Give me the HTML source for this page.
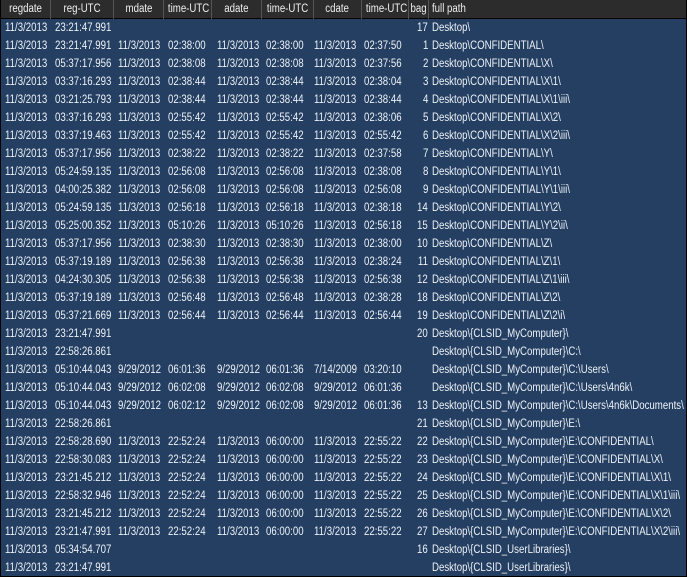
<!DOCTYPE html>
<html><head><meta charset="utf-8"><style>
*{margin:0;padding:0;box-sizing:border-box}
body{width:687px;height:577px;background:#000;overflow:hidden;font-family:"Liberation Sans Narrow","Liberation Sans",sans-serif;font-size:11.5px;color:#eef2f7}
#w{position:absolute;left:1px;top:0;width:685px;height:576px;background:#243f62}
#h{position:absolute;left:0;top:0;width:685px;height:19px;background:#2c2c2c;border-bottom:1px solid #000}
#h div{position:absolute;top:0;height:19px;line-height:18px;text-align:center;border-right:1px solid #555;color:#f0f0f0;white-space:nowrap;overflow:visible}
#h div span,.r span i{display:inline-block;transform:scaleX(.84);font-style:normal;white-space:nowrap}
.r{position:absolute;left:0;height:18px;width:685px;line-height:18px;white-space:nowrap}
.r span{position:absolute;top:0}
.r span i{transform-origin:left center}
.r span.b{left:auto;right:258px}
.r span.b i{transform-origin:right center}
.a{left:4px}.c{left:54px}.d{left:117px}.e{left:167px}.f{left:216px}.g{left:265px}.k{left:313px}.l{left:363px}.p{left:431px}
</style></head><body><div id="w">
<div id="h">
<div style="left:0;width:50px"><span>regdate</span></div>
<div style="left:50px;width:63px"><span>reg-UTC</span></div>
<div style="left:113px;width:50px"><span>mdate</span></div>
<div style="left:163px;width:48px"><span>time-UTC</span></div>
<div style="left:211px;width:50px"><span>adate</span></div>
<div style="left:261px;width:52px"><span>time-UTC</span></div>
<div style="left:313px;width:48px"><span>cdate</span></div>
<div style="left:361px;width:47px"><span>time-UTC</span></div>
<div style="left:408px;width:20px"><span>bag</span></div>
<div style="left:428px;width:257px;text-align:left;padding-left:3px;border:none"><span style="transform-origin:left center">full path</span></div>
</div>

<div class="r" style="top:19px"><span class="a"><i>11/3/2013</i></span><span class="c"><i>23:21:47.991</i></span><span class="b"><i>17</i></span><span class="p"><i>Desktop\</i></span></div>
<div class="r" style="top:37px"><span class="a"><i>11/3/2013</i></span><span class="c"><i>23:21:47.991</i></span><span class="d"><i>11/3/2013</i></span><span class="e"><i>02:38:00</i></span><span class="f"><i>11/3/2013</i></span><span class="g"><i>02:38:00</i></span><span class="k"><i>11/3/2013</i></span><span class="l"><i>02:37:50</i></span><span class="b"><i>1</i></span><span class="p"><i>Desktop\CONFIDENTIAL\</i></span></div>
<div class="r" style="top:55px"><span class="a"><i>11/3/2013</i></span><span class="c"><i>05:37:17.956</i></span><span class="d"><i>11/3/2013</i></span><span class="e"><i>02:38:08</i></span><span class="f"><i>11/3/2013</i></span><span class="g"><i>02:38:08</i></span><span class="k"><i>11/3/2013</i></span><span class="l"><i>02:37:56</i></span><span class="b"><i>2</i></span><span class="p"><i>Desktop\CONFIDENTIAL\X\</i></span></div>
<div class="r" style="top:73px"><span class="a"><i>11/3/2013</i></span><span class="c"><i>03:37:16.293</i></span><span class="d"><i>11/3/2013</i></span><span class="e"><i>02:38:44</i></span><span class="f"><i>11/3/2013</i></span><span class="g"><i>02:38:44</i></span><span class="k"><i>11/3/2013</i></span><span class="l"><i>02:38:04</i></span><span class="b"><i>3</i></span><span class="p"><i>Desktop\CONFIDENTIAL\X\1\</i></span></div>
<div class="r" style="top:91px"><span class="a"><i>11/3/2013</i></span><span class="c"><i>03:21:25.793</i></span><span class="d"><i>11/3/2013</i></span><span class="e"><i>02:38:44</i></span><span class="f"><i>11/3/2013</i></span><span class="g"><i>02:38:44</i></span><span class="k"><i>11/3/2013</i></span><span class="l"><i>02:38:44</i></span><span class="b"><i>4</i></span><span class="p"><i>Desktop\CONFIDENTIAL\X\1\iii\</i></span></div>
<div class="r" style="top:109px"><span class="a"><i>11/3/2013</i></span><span class="c"><i>03:37:16.293</i></span><span class="d"><i>11/3/2013</i></span><span class="e"><i>02:55:42</i></span><span class="f"><i>11/3/2013</i></span><span class="g"><i>02:55:42</i></span><span class="k"><i>11/3/2013</i></span><span class="l"><i>02:38:06</i></span><span class="b"><i>5</i></span><span class="p"><i>Desktop\CONFIDENTIAL\X\2\</i></span></div>
<div class="r" style="top:127px"><span class="a"><i>11/3/2013</i></span><span class="c"><i>03:37:19.463</i></span><span class="d"><i>11/3/2013</i></span><span class="e"><i>02:55:42</i></span><span class="f"><i>11/3/2013</i></span><span class="g"><i>02:55:42</i></span><span class="k"><i>11/3/2013</i></span><span class="l"><i>02:55:42</i></span><span class="b"><i>6</i></span><span class="p"><i>Desktop\CONFIDENTIAL\X\2\iii\</i></span></div>
<div class="r" style="top:145px"><span class="a"><i>11/3/2013</i></span><span class="c"><i>05:37:17.956</i></span><span class="d"><i>11/3/2013</i></span><span class="e"><i>02:38:22</i></span><span class="f"><i>11/3/2013</i></span><span class="g"><i>02:38:22</i></span><span class="k"><i>11/3/2013</i></span><span class="l"><i>02:37:58</i></span><span class="b"><i>7</i></span><span class="p"><i>Desktop\CONFIDENTIAL\Y\</i></span></div>
<div class="r" style="top:163px"><span class="a"><i>11/3/2013</i></span><span class="c"><i>05:24:59.135</i></span><span class="d"><i>11/3/2013</i></span><span class="e"><i>02:56:08</i></span><span class="f"><i>11/3/2013</i></span><span class="g"><i>02:56:08</i></span><span class="k"><i>11/3/2013</i></span><span class="l"><i>02:38:08</i></span><span class="b"><i>8</i></span><span class="p"><i>Desktop\CONFIDENTIAL\Y\1\</i></span></div>
<div class="r" style="top:181px"><span class="a"><i>11/3/2013</i></span><span class="c"><i>04:00:25.382</i></span><span class="d"><i>11/3/2013</i></span><span class="e"><i>02:56:08</i></span><span class="f"><i>11/3/2013</i></span><span class="g"><i>02:56:08</i></span><span class="k"><i>11/3/2013</i></span><span class="l"><i>02:56:08</i></span><span class="b"><i>9</i></span><span class="p"><i>Desktop\CONFIDENTIAL\Y\1\iii\</i></span></div>
<div class="r" style="top:199px"><span class="a"><i>11/3/2013</i></span><span class="c"><i>05:24:59.135</i></span><span class="d"><i>11/3/2013</i></span><span class="e"><i>02:56:18</i></span><span class="f"><i>11/3/2013</i></span><span class="g"><i>02:56:18</i></span><span class="k"><i>11/3/2013</i></span><span class="l"><i>02:38:18</i></span><span class="b"><i>14</i></span><span class="p"><i>Desktop\CONFIDENTIAL\Y\2\</i></span></div>
<div class="r" style="top:217px"><span class="a"><i>11/3/2013</i></span><span class="c"><i>05:25:00.352</i></span><span class="d"><i>11/3/2013</i></span><span class="e"><i>05:10:26</i></span><span class="f"><i>11/3/2013</i></span><span class="g"><i>05:10:26</i></span><span class="k"><i>11/3/2013</i></span><span class="l"><i>02:56:18</i></span><span class="b"><i>15</i></span><span class="p"><i>Desktop\CONFIDENTIAL\Y\2\ii\</i></span></div>
<div class="r" style="top:235px"><span class="a"><i>11/3/2013</i></span><span class="c"><i>05:37:17.956</i></span><span class="d"><i>11/3/2013</i></span><span class="e"><i>02:38:30</i></span><span class="f"><i>11/3/2013</i></span><span class="g"><i>02:38:30</i></span><span class="k"><i>11/3/2013</i></span><span class="l"><i>02:38:00</i></span><span class="b"><i>10</i></span><span class="p"><i>Desktop\CONFIDENTIAL\Z\</i></span></div>
<div class="r" style="top:253px"><span class="a"><i>11/3/2013</i></span><span class="c"><i>05:37:19.189</i></span><span class="d"><i>11/3/2013</i></span><span class="e"><i>02:56:38</i></span><span class="f"><i>11/3/2013</i></span><span class="g"><i>02:56:38</i></span><span class="k"><i>11/3/2013</i></span><span class="l"><i>02:38:24</i></span><span class="b"><i>11</i></span><span class="p"><i>Desktop\CONFIDENTIAL\Z\1\</i></span></div>
<div class="r" style="top:271px"><span class="a"><i>11/3/2013</i></span><span class="c"><i>04:24:30.305</i></span><span class="d"><i>11/3/2013</i></span><span class="e"><i>02:56:38</i></span><span class="f"><i>11/3/2013</i></span><span class="g"><i>02:56:38</i></span><span class="k"><i>11/3/2013</i></span><span class="l"><i>02:56:38</i></span><span class="b"><i>12</i></span><span class="p"><i>Desktop\CONFIDENTIAL\Z\1\iii\</i></span></div>
<div class="r" style="top:289px"><span class="a"><i>11/3/2013</i></span><span class="c"><i>05:37:19.189</i></span><span class="d"><i>11/3/2013</i></span><span class="e"><i>02:56:48</i></span><span class="f"><i>11/3/2013</i></span><span class="g"><i>02:56:48</i></span><span class="k"><i>11/3/2013</i></span><span class="l"><i>02:38:28</i></span><span class="b"><i>18</i></span><span class="p"><i>Desktop\CONFIDENTIAL\Z\2\</i></span></div>
<div class="r" style="top:307px"><span class="a"><i>11/3/2013</i></span><span class="c"><i>05:37:21.669</i></span><span class="d"><i>11/3/2013</i></span><span class="e"><i>02:56:44</i></span><span class="f"><i>11/3/2013</i></span><span class="g"><i>02:56:44</i></span><span class="k"><i>11/3/2013</i></span><span class="l"><i>02:56:44</i></span><span class="b"><i>19</i></span><span class="p"><i>Desktop\CONFIDENTIAL\Z\2\i\</i></span></div>
<div class="r" style="top:325px"><span class="a"><i>11/3/2013</i></span><span class="c"><i>23:21:47.991</i></span><span class="b"><i>20</i></span><span class="p"><i>Desktop\{CLSID_MyComputer}\</i></span></div>
<div class="r" style="top:343px"><span class="a"><i>11/3/2013</i></span><span class="c"><i>22:58:26.861</i></span><span class="p"><i>Desktop\{CLSID_MyComputer}\C:\</i></span></div>
<div class="r" style="top:361px"><span class="a"><i>11/3/2013</i></span><span class="c"><i>05:10:44.043</i></span><span class="d"><i>9/29/2012</i></span><span class="e"><i>06:01:36</i></span><span class="f"><i>9/29/2012</i></span><span class="g"><i>06:01:36</i></span><span class="k"><i>7/14/2009</i></span><span class="l"><i>03:20:10</i></span><span class="p"><i>Desktop\{CLSID_MyComputer}\C:\Users\</i></span></div>
<div class="r" style="top:379px"><span class="a"><i>11/3/2013</i></span><span class="c"><i>05:10:44.043</i></span><span class="d"><i>9/29/2012</i></span><span class="e"><i>06:02:08</i></span><span class="f"><i>9/29/2012</i></span><span class="g"><i>06:02:08</i></span><span class="k"><i>9/29/2012</i></span><span class="l"><i>06:01:36</i></span><span class="p"><i>Desktop\{CLSID_MyComputer}\C:\Users\4n6k\</i></span></div>
<div class="r" style="top:397px"><span class="a"><i>11/3/2013</i></span><span class="c"><i>05:10:44.043</i></span><span class="d"><i>9/29/2012</i></span><span class="e"><i>06:02:12</i></span><span class="f"><i>9/29/2012</i></span><span class="g"><i>06:02:08</i></span><span class="k"><i>9/29/2012</i></span><span class="l"><i>06:01:36</i></span><span class="b"><i>13</i></span><span class="p"><i>Desktop\{CLSID_MyComputer}\C:\Users\4n6k\Documents\</i></span></div>
<div class="r" style="top:415px"><span class="a"><i>11/3/2013</i></span><span class="c"><i>22:58:26.861</i></span><span class="b"><i>21</i></span><span class="p"><i>Desktop\{CLSID_MyComputer}\E:\</i></span></div>
<div class="r" style="top:433px"><span class="a"><i>11/3/2013</i></span><span class="c"><i>22:58:28.690</i></span><span class="d"><i>11/3/2013</i></span><span class="e"><i>22:52:24</i></span><span class="f"><i>11/3/2013</i></span><span class="g"><i>06:00:00</i></span><span class="k"><i>11/3/2013</i></span><span class="l"><i>22:55:22</i></span><span class="b"><i>22</i></span><span class="p"><i>Desktop\{CLSID_MyComputer}\E:\CONFIDENTIAL\</i></span></div>
<div class="r" style="top:451px"><span class="a"><i>11/3/2013</i></span><span class="c"><i>22:58:30.083</i></span><span class="d"><i>11/3/2013</i></span><span class="e"><i>22:52:24</i></span><span class="f"><i>11/3/2013</i></span><span class="g"><i>06:00:00</i></span><span class="k"><i>11/3/2013</i></span><span class="l"><i>22:55:22</i></span><span class="b"><i>23</i></span><span class="p"><i>Desktop\{CLSID_MyComputer}\E:\CONFIDENTIAL\X\</i></span></div>
<div class="r" style="top:469px"><span class="a"><i>11/3/2013</i></span><span class="c"><i>23:21:45.212</i></span><span class="d"><i>11/3/2013</i></span><span class="e"><i>22:52:24</i></span><span class="f"><i>11/3/2013</i></span><span class="g"><i>06:00:00</i></span><span class="k"><i>11/3/2013</i></span><span class="l"><i>22:55:22</i></span><span class="b"><i>24</i></span><span class="p"><i>Desktop\{CLSID_MyComputer}\E:\CONFIDENTIAL\X\1\</i></span></div>
<div class="r" style="top:487px"><span class="a"><i>11/3/2013</i></span><span class="c"><i>22:58:32.946</i></span><span class="d"><i>11/3/2013</i></span><span class="e"><i>22:52:24</i></span><span class="f"><i>11/3/2013</i></span><span class="g"><i>06:00:00</i></span><span class="k"><i>11/3/2013</i></span><span class="l"><i>22:55:22</i></span><span class="b"><i>25</i></span><span class="p"><i>Desktop\{CLSID_MyComputer}\E:\CONFIDENTIAL\X\1\iii\</i></span></div>
<div class="r" style="top:505px"><span class="a"><i>11/3/2013</i></span><span class="c"><i>23:21:45.212</i></span><span class="d"><i>11/3/2013</i></span><span class="e"><i>22:52:24</i></span><span class="f"><i>11/3/2013</i></span><span class="g"><i>06:00:00</i></span><span class="k"><i>11/3/2013</i></span><span class="l"><i>22:55:22</i></span><span class="b"><i>26</i></span><span class="p"><i>Desktop\{CLSID_MyComputer}\E:\CONFIDENTIAL\X\2\</i></span></div>
<div class="r" style="top:523px"><span class="a"><i>11/3/2013</i></span><span class="c"><i>23:21:47.991</i></span><span class="d"><i>11/3/2013</i></span><span class="e"><i>22:52:24</i></span><span class="f"><i>11/3/2013</i></span><span class="g"><i>06:00:00</i></span><span class="k"><i>11/3/2013</i></span><span class="l"><i>22:55:22</i></span><span class="b"><i>27</i></span><span class="p"><i>Desktop\{CLSID_MyComputer}\E:\CONFIDENTIAL\X\2\iii\</i></span></div>
<div class="r" style="top:541px"><span class="a"><i>11/3/2013</i></span><span class="c"><i>05:34:54.707</i></span><span class="b"><i>16</i></span><span class="p"><i>Desktop\{CLSID_UserLibraries}\</i></span></div>
<div class="r" style="top:559px"><span class="a"><i>11/3/2013</i></span><span class="c"><i>23:21:47.991</i></span><span class="p"><i>Desktop\{CLSID_UserLibraries}\</i></span></div>
</div></body></html>
